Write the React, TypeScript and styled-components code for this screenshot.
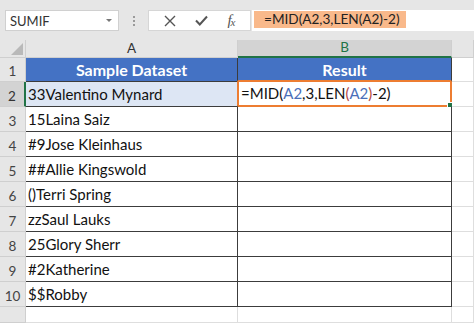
import React from 'react';
import styled, { createGlobalStyle, css } from 'styled-components';

const GlobalStyle = createGlobalStyle`
  html, body {
    margin: 0;
    padding: 0;
    background: #ffffff;
    overflow: hidden;
  }
  * { box-sizing: border-box; }
`;

const FONT = `Lato, "Open Sans", "Liberation Sans", sans-serif`;

const Page = styled.div`
  width: 474px;
  height: 323px;
  display: flex;
  flex-direction: column;
  font-family: ${FONT};
  background: #ffffff;
`;

const Toolbar = styled.div`
  height: 40px;
  flex: none;
  background: #e6e6e6;
  display: flex;
  align-items: flex-start;
  padding: 10px 0 0 5px;
`;

const NameBox = styled.div`
  width: 114px;
  height: 21px;
  background: #ffffff;
  border: 1px solid #d0d0d0;
  display: flex;
  align-items: center;
  justify-content: space-between;
  padding: 0 6px 0 4px;
  font-size: 13px;
  color: #333;
`;

const Caret = styled.span`
  width: 0;
  height: 0;
  border-left: 3px solid transparent;
  border-right: 3px solid transparent;
  border-top: 3px solid #777;
`;

const Grip = styled.div`
  width: 29px;
  height: 21px;
  display: flex;
  flex-direction: column;
  align-items: center;
  justify-content: center;
  gap: 2px;
  span {
    width: 2px;
    height: 2px;
    background: #9a9a9a;
  }
`;

const IconBox = styled.div`
  width: 103px;
  height: 21px;
  background: #ffffff;
  border: 1px solid #d6d6d6;
  display: flex;
  align-items: center;
  justify-content: space-around;
  padding: 0 6px;
  color: #555;
`;

const Fx = styled.span`
  font-family: "Liberation Serif", serif;
  font-style: italic;
  font-size: 15px;
  color: #555;
  letter-spacing: -1px;
  sub { font-size: 11px; vertical-align: -1px; }
`;

const FormulaField = styled.div`
  flex: 1;
  height: 21px;
  margin-left: 1px;
  background: #ffffff;
  display: flex;
  align-items: flex-start;
  padding: 1px 0 0 2px;
`;

const Highlight = styled.div`
  width: 152px;
  height: 17px;
  background: #f9b98b;
  font-size: 13.6px;
  line-height: 17px;
  padding-left: 10px;
  color: #222;
`;

const Sheet = styled.div`
  flex: 1;
  display: grid;
  grid-template-columns: 26px 212px 214px 1fr;
  grid-template-rows: 18px 24px repeat(9, 25px) 1fr;
`;

const Corner = styled.div`
  background: #e6e6e6;
  border-right: 1px solid #cfcfcf;
  border-bottom: 1px solid #cfcfcf;
  display: flex;
  align-items: flex-end;
  justify-content: flex-end;
  padding: 0 2px 2px 0;
  span {
    width: 0;
    height: 0;
    border-left: 12px solid transparent;
    border-bottom: 12px solid #b9b9b9;
  }
`;

const ColHead = styled.div<{ $active?: boolean }>`
  background: ${(p) => (p.$active ? '#d3d3d3' : '#e6e6e6')};
  border-right: 1px solid #cfcfcf;
  border-bottom: ${(p) => (p.$active ? '2px solid #217346' : '1px solid #cfcfcf')};
  color: ${(p) => (p.$active ? '#217346' : '#333')};
  font-size: 13.5px;
  display: flex;
  justify-content: center;
  align-items: flex-end;
  padding-bottom: 1px;
`;

const RowHead = styled.div<{ $active?: boolean }>`
  background: ${(p) => (p.$active ? '#d3d3d3' : '#e6e6e6')};
  border-bottom: 1px solid #cfcfcf;
  border-right: ${(p) => (p.$active ? '2px solid #217346' : '1px solid #cfcfcf')};
  color: ${(p) => (p.$active ? '#333' : '#444')};
  font-size: 13.5px;
  display: flex;
  justify-content: center;
  align-items: flex-end;
  padding-bottom: 2px;
`;

const Cell = styled.div<{ $kind?: 'head' | 'data' | 'empty' | 'pick' }>`
  position: relative;
  font-size: 15px;
  color: #111;
  display: flex;
  align-items: flex-end;
  padding: 0 0 3px 2px;
  white-space: nowrap;
  border-right: 1px solid #3c3c3c;
  border-bottom: 1px solid #3c3c3c;
  background: #ffffff;
  ${(p) =>
    p.$kind === 'head' &&
    css`
      background: #4472c4;
      color: #ffffff;
      font-weight: 700;
      font-size: 16px;
      justify-content: center;
      padding: 0 0 2px 0;
    `}
  ${(p) =>
    p.$kind === 'pick' &&
    css`
      background: #dde6f4;
    `}
  ${(p) =>
    p.$kind === 'empty' &&
    css`
      border-right: 1px solid #dedede;
      border-bottom: 1px solid #dedede;
    `}
`;

const Editing = styled.div`
  position: absolute;
  inset: -2px -1px -1px -1px;
  border: 2px solid #ed7d31;
  border-radius: 2px;
  display: flex;
  align-items: flex-end;
  padding: 0 0 3px 2px;
  font-size: 15px;
  color: #111;
  &::after {
    content: '';
    position: absolute;
    right: -4px;
    bottom: -4px;
    width: 5px;
    height: 5px;
    background: #217346;
    border: 1px solid #fff;
  }
`;

const Ref = styled.span`
  color: #4a6fb9;
`;

const Paren = styled.span`
  color: #b5473f;
`;

const names = [
  '15Laina Saiz',
  '#9Jose Kleinhaus',
  '##Allie Kingswold',
  '()Terri Spring',
  'zzSaul Lauks',
  '25Glory Sherr',
  '#2Katherine',
  '$$Robby',
];

export default function App() {
  return (
    <Page>
      <GlobalStyle />
      <Toolbar>
        <NameBox>
          SUMIF
          <Caret />
        </NameBox>
        <Grip>
          <span />
          <span />
          <span />
        </Grip>
        <IconBox>
          <svg width="12" height="12" viewBox="0 0 12 12">
            <path d="M1 1 L11 11 M11 1 L1 11" stroke="#555" strokeWidth="1.4" fill="none" />
          </svg>
          <svg width="13" height="11" viewBox="0 0 13 11">
            <path d="M1 5.5 L4.8 9.5 L12 1.5" stroke="#555" strokeWidth="2" fill="none" />
          </svg>
          <Fx>
            f<sub>x</sub>
          </Fx>
        </IconBox>
        <FormulaField>
          <Highlight>=MID(A2,3,LEN(A2)-2)</Highlight>
        </FormulaField>
      </Toolbar>
      <Sheet>
        <Corner>
          <span />
        </Corner>
        <ColHead>A</ColHead>
        <ColHead $active>B</ColHead>
        <ColHead />

        <RowHead>1</RowHead>
        <Cell $kind="head">Sample Dataset</Cell>
        <Cell $kind="head">Result</Cell>
        <Cell $kind="empty" />

        <RowHead $active>2</RowHead>
        <Cell $kind="pick">33Valentino Mynard</Cell>
        <Cell>
          <Editing>
            =MID(<Ref>A2</Ref>,3,LEN<Paren>(</Paren>
            <Ref>A2</Ref>
            <Paren>)</Paren>-2)
          </Editing>
        </Cell>
        <Cell $kind="empty" />

        {names.map((n, i) => (
          <React.Fragment key={n}>
            <RowHead>{i + 3}</RowHead>
            <Cell $kind="data">{n}</Cell>
            <Cell $kind="data" />
            <Cell $kind="empty" />
          </React.Fragment>
        ))}

        <RowHead />
        <Cell $kind="empty" />
        <Cell $kind="empty" />
        <Cell $kind="empty" />
      </Sheet>
    </Page>
  );
}
